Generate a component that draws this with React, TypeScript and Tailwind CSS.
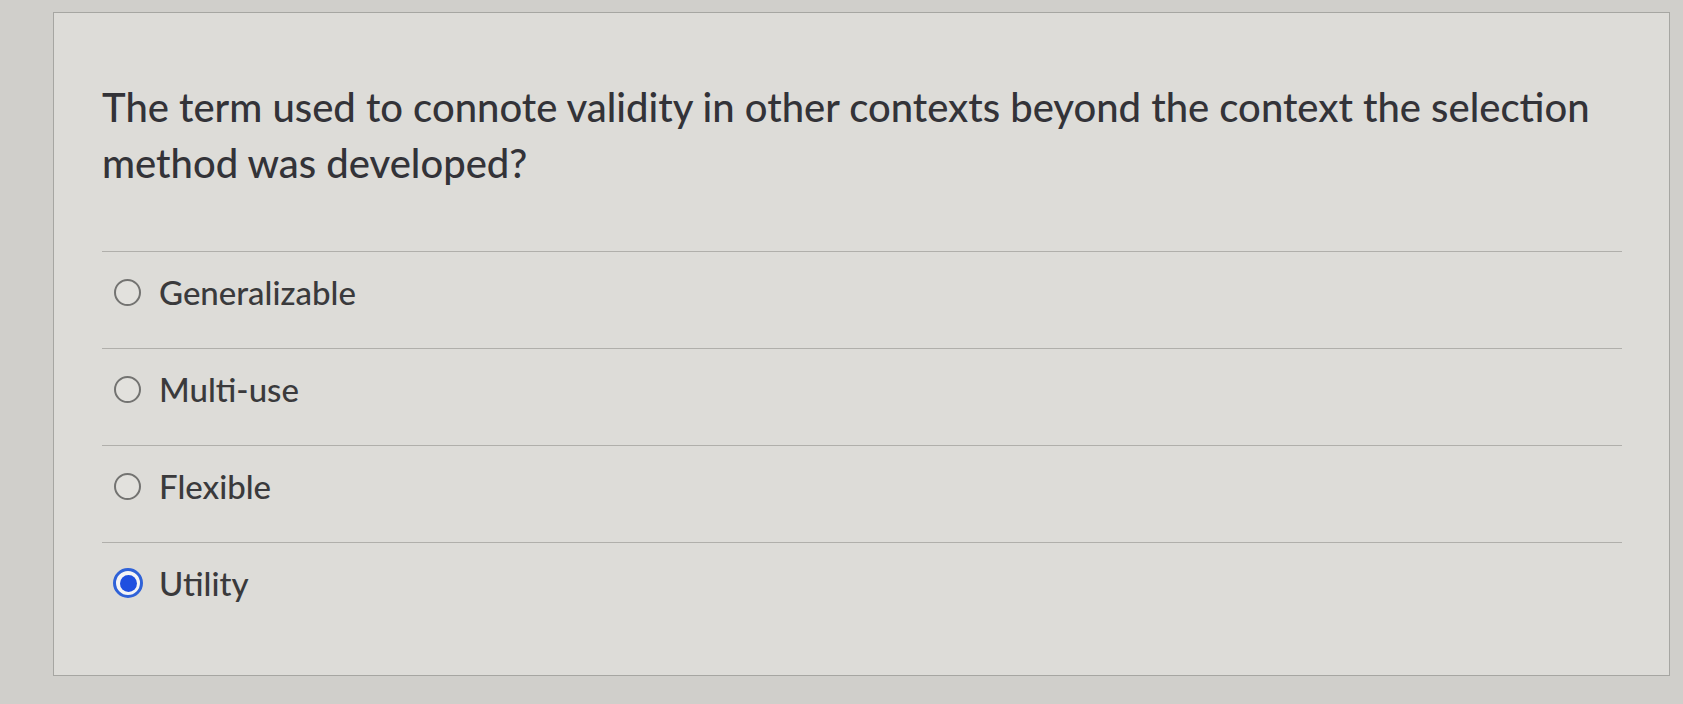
import React from "react";

const options = [
  { label: "Generalizable", selected: false },
  { label: "Multi-use", selected: false },
  { label: "Flexible", selected: false },
  { label: "Utility", selected: true },
];

function Radio({ selected }: { selected: boolean }) {
  if (selected) {
    return (
      <span className="flex h-[30px] w-[30px] shrink-0 items-center justify-center rounded-full border-[3px] border-[#2f62d8] bg-[#f4f4f6]">
        <span className="h-[17px] w-[17px] rounded-full bg-[#1f4fe0]" />
      </span>
    );
  }
  return <span className="ml-[1px] mr-[2px] h-[27px] w-[27px] shrink-0 rounded-full border-[2.5px] border-[#737371] bg-[#e2e1dd]" />;
}

export default function App() {
  return (
    <div
      className="h-[704px] w-full overflow-hidden bg-[#d0cfcb] pl-[53px] pt-[12px]"
      style={{ fontFamily: "Lato, 'Noto Sans', sans-serif" }}
    >
      <div className="h-[664px] w-[1617px] border border-[#a6a6a2] bg-[#dddcd8] pl-[48px] pt-[66px]">
        <p className="w-[1550px] text-[40px] font-medium leading-[56px] text-[#333338]">
          The term used to connote validity in other contexts beyond the context the selection method was developed?
        </p>
        <div className="mt-[60px] w-[1520px]">
          {options.map((o) => (
            <div key={o.label} className="border-t border-[#b0afab] pb-[16px]">
              <div className="flex h-[80px] items-center gap-[16px] pl-[11px]">
                <Radio selected={o.selected} />
                <span className="text-[33px] font-medium leading-none text-[#3a3a3c]">{o.label}</span>
              </div>
            </div>
          ))}
        </div>
      </div>
    </div>
  );
}
